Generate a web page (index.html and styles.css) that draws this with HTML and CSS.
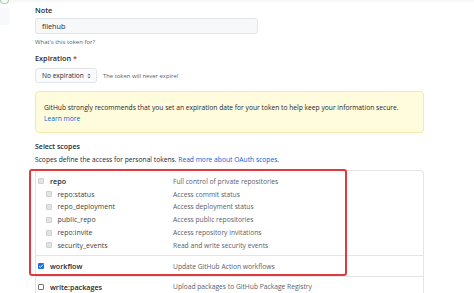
FILE: index.html
```html
<!DOCTYPE html>
<html>
<head>
<meta charset="utf-8">
<link rel="stylesheet" href="styles.css">
</head>
<body>
<div class="page">
  <aside class="sidebar">
    <div class="badge"></div>
    <div class="stub"></div>
  </aside>
  <main class="main">
    <div class="label">Note</div>
    <div class="input">filehub</div>
    <div class="hint">What’s this token for?</div>

    <div class="label label-gap">Expiration <span class="req">*</span></div>
    <div class="exp-row">
      <div class="select"><span>No expiration</span><svg class="arrows" viewBox="0 0 6 8" width="4" height="6"><path d="M3 0.5 L5.5 3 H0.5 Z M3 7.5 L5.5 5 H0.5 Z" fill="#586069"/></svg></div>
      <div class="exp-note">The token will never expire!</div>
    </div>

    <div class="flash">
      <div>GitHub strongly recommends that you set an expiration date for your token to help keep your information secure.</div>
      <a class="link" href="#">Learn more</a>
    </div>

    <div class="label scopes-title">Select scopes</div>
    <div class="scopes-desc">Scopes define the access for personal tokens. <a class="link" href="#">Read more about OAuth scopes.</a></div>

    <div class="table-wrap">
      <div class="scopes">
        <div class="group">
          <div class="row">
            <div class="cell"><span class="cb cb-dis"></span><span class="name">repo</span></div>
            <div class="desc">Full control of private repositories</div>
          </div>
          <div class="row">
            <div class="cell sub"><span class="cb cb-dis"></span><span class="subname">repo:status</span></div>
            <div class="desc">Access commit status</div>
          </div>
          <div class="row">
            <div class="cell sub"><span class="cb cb-dis"></span><span class="subname">repo_deployment</span></div>
            <div class="desc">Access deployment status</div>
          </div>
          <div class="row">
            <div class="cell sub"><span class="cb cb-dis"></span><span class="subname">public_repo</span></div>
            <div class="desc">Access public repositories</div>
          </div>
          <div class="row">
            <div class="cell sub"><span class="cb cb-dis"></span><span class="subname">repo:invite</span></div>
            <div class="desc">Access repository invitations</div>
          </div>
          <div class="row">
            <div class="cell sub"><span class="cb cb-dis"></span><span class="subname">security_events</span></div>
            <div class="desc">Read and write security events</div>
          </div>
        </div>
        <div class="group">
          <div class="row">
            <div class="cell"><span class="cb cb-on"><svg viewBox="0 0 8 8" width="6" height="6"><path d="M1.5 4.2 L3.2 5.8 L6.5 2.2" fill="none" stroke="#fff" stroke-width="1.3"/></svg></span><span class="name">workflow</span></div>
            <div class="desc">Update GitHub Action workflows</div>
          </div>
        </div>
        <div class="group">
          <div class="row">
            <div class="cell"><span class="cb cb-off"></span><span class="name">write:packages</span></div>
            <div class="desc">Upload packages to GitHub Package Registry</div>
          </div>
        </div>
      </div>
      <div class="highlight"></div>
    </div>
  </main>
</div>
</body>
</html>
```

FILE: styles.css
```css
html, body {
  margin: 0;
  padding: 0;
  background: #ffffff;
}
body {
  font-family: "Open Sans", "Noto Sans", sans-serif;
  color: #24292e;
  font-size: 7px;
  overflow: hidden;
  height: 293px;
}
.page {
  display: flex;
  border-top: 2px solid #f6f7f8;
}
.sidebar {
  width: 35px;
  flex: none;
}
.badge {
  width: 7px;
  height: 3px;
  border: 1px solid #9fd3a8;
  border-top: none;
  border-radius: 0 0 4px 4px;
  margin-top: -2px;
}
.stub {
  width: 10px;
  height: 17px;
  margin-top: 4px;
  background: #f8f9fa;
  border-radius: 0 2px 2px 0;
}
.main {
  width: 389px;
  padding-top: 3px;
}
.label {
  font-weight: 600;
  font-size: 7.3px;
  line-height: 11px;
}
.label-gap {
  margin-top: 6px;
}
.req {
  color: #cb2431;
}
.input {
  margin-top: 2px;
  width: 223px;
  height: 16px;
  box-sizing: border-box;
  border: 1px solid #e1e4e8;
  border-radius: 3px;
  background: #f6f8fa;
  padding-left: 6px;
  line-height: 14px;
  font-size: 7.2px;
}
.hint {
  margin-top: 3px;
  font-size: 6px;
  line-height: 10px;
  color: #586069;
}
.exp-row {
  display: flex;
  align-items: center;
  margin-top: 4px;
  gap: 6px;
}
.select {
  width: 62px;
  height: 15px;
  box-sizing: border-box;
  border: 1px solid #e1e4e8;
  border-radius: 3px;
  background: #fafbfc;
  display: flex;
  align-items: center;
  justify-content: space-between;
  padding: 0 5px 0 6px;
  font-size: 6.6px;
}
.arrows {
  flex: none;
}
.exp-note {
  font-size: 5.9px;
  color: #586069;
}
.flash {
  margin-top: 8px;
  box-sizing: border-box;
  height: 42px;
  border: 1px solid #f5e9ae;
  border-radius: 4px;
  background: #fffbdd;
  padding: 9.5px 8px 0 8px;
  font-size: 6.7px;
  line-height: 11px;
}
.link {
  color: #0366d6;
  text-decoration: none;
}
.scopes-title {
  margin-top: 7.5px;
  font-size: 7px;
}
.scopes-desc {
  margin-top: 3.5px;
  font-size: 6.7px;
  line-height: 10px;
}
.table-wrap {
  position: relative;
  margin-top: 5px;
}
.scopes {
  border: 1px solid #e1e4e8;
  border-bottom: none;
  border-radius: 4px 4px 0 0;
}
.group {
  padding: 4px 0 3px 0;
}
.group + .group {
  border-top: 1px solid #e1e4e8;
}
.row {
  display: grid;
  grid-template-columns: 137px 1fr;
  height: 12.8px;
  align-items: center;
}
.cell {
  display: flex;
  align-items: center;
  gap: 6px;
  padding-left: 2px;
}
.cell.sub {
  padding-left: 10px;
  gap: 5.5px;
}
.cb {
  width: 6px;
  height: 6px;
  box-sizing: border-box;
  border-radius: 1px;
  flex: none;
  display: flex;
  align-items: center;
  justify-content: center;
}
.cb-dis {
  background: #e3e3e3;
  border: 1px solid #d0d0d0;
}
.cb-on {
  background: #1a6ee8;
  border: none;
}
.cb-off {
  background: #fff;
  border: 1px solid #777;
}
.name {
  font-weight: 600;
  font-size: 7.2px;
}
.subname {
  font-size: 7px;
  color: #3a3f44;
}
.desc {
  font-size: 6.7px;
  color: #586069;
}
.highlight {
  position: absolute;
  left: -6px;
  top: -1px;
  width: 318px;
  height: 107px;
  box-sizing: border-box;
  border: 2px solid #e0393e;
  border-radius: 3px;
}
```
